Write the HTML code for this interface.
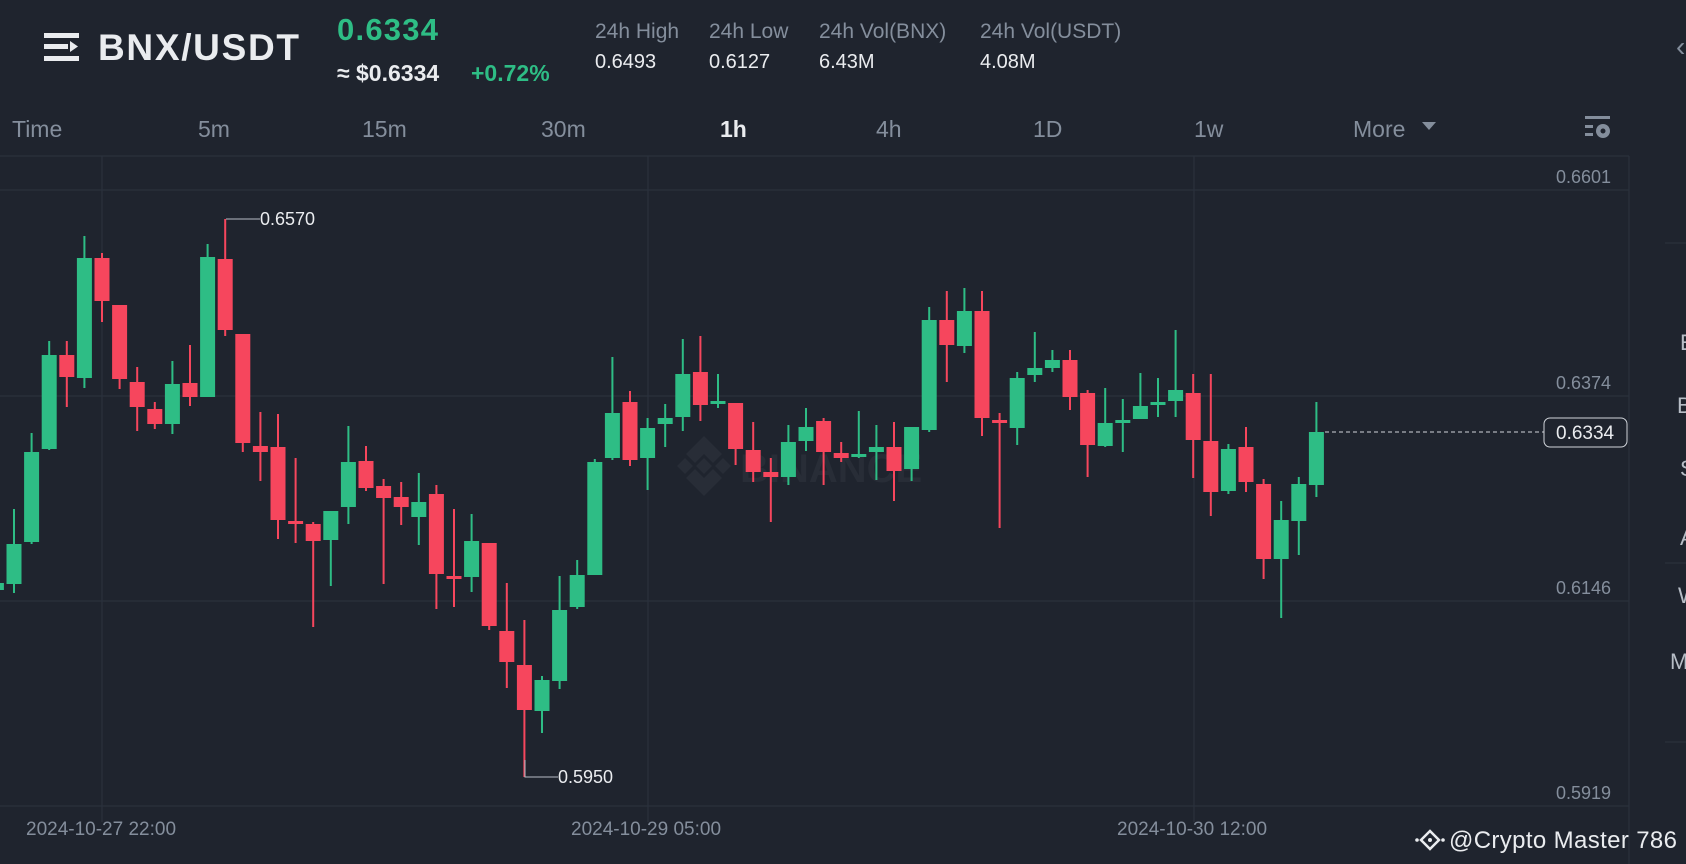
<!DOCTYPE html>
<html><head><meta charset="utf-8"><style>
html,body{margin:0;padding:0;background:#1f242e;width:1686px;height:864px;overflow:hidden}
svg{display:block}
text{font-family:"Liberation Sans",sans-serif}
</style></head><body>
<svg id="s" width="1686" height="864" viewBox="0 0 1686 864" xmlns="http://www.w3.org/2000/svg">
<rect width="1686" height="864" fill="#1f242e"/>
<g fill="#eaecef">
<rect x="44" y="33" width="35" height="5"/>
<rect x="44" y="44" width="24" height="5"/>
<polygon points="70,41 78,46.5 70,52"/>
<rect x="44" y="56" width="35" height="5"/>
</g>
<text x="98" y="60" font-size="37" font-weight="bold" fill="#eaecef" textLength="201">BNX/USDT</text>
<text x="337" y="40" font-size="31" font-weight="bold" fill="#2ebd85" textLength="101">0.6334</text>
<text x="337" y="81" font-size="23" font-weight="bold" fill="#eaecef">≈ $0.6334</text>
<text x="471" y="81" font-size="23" font-weight="bold" fill="#2ebd85">+0.72%</text>
<g font-size="21" fill="#848e9c">
<text x="595" y="38">24h High</text><text x="709" y="38">24h Low</text><text x="819" y="38">24h Vol(BNX)</text><text x="980" y="38">24h Vol(USDT)</text>
</g>
<g font-size="20" fill="#eaecef">
<text x="595" y="68">0.6493</text><text x="709" y="68">0.6127</text><text x="819" y="68">6.43M</text><text x="980" y="68">4.08M</text>
</g>
<text x="1676" y="56" font-size="28" fill="#848e9c">‹</text>
<g font-size="23" fill="#848e9c">
<text x="12" y="137">Time</text><text x="198" y="137">5m</text><text x="362" y="137">15m</text><text x="541" y="137">30m</text>
<text x="720" y="137" fill="#eaecef" font-weight="bold">1h</text>
<text x="876" y="137">4h</text><text x="1033" y="137">1D</text><text x="1194" y="137">1w</text><text x="1353" y="137">More</text>
</g>
<polygon points="1422,122 1436,122 1429,130" fill="#848e9c"/>
<g fill="#848e9c"><rect x="1585" y="116" width="25" height="3"/><rect x="1585" y="125" width="8" height="3"/><rect x="1585" y="133" width="8" height="3"/><circle cx="1603" cy="131" r="7"/><circle cx="1603" cy="131" r="2.5" fill="#1f242e"/></g>
<g stroke="#2b313c" stroke-width="1.2">
<line x1="0" y1="156" x2="1629" y2="156"/>
<line x1="0" y1="190" x2="1629" y2="190"/><line x1="0" y1="396" x2="1629" y2="396"/>
<line x1="0" y1="601" x2="1629" y2="601"/><line x1="0" y1="806" x2="1629" y2="806"/>
<line x1="102" y1="156" x2="102" y2="822"/><line x1="648" y1="156" x2="648" y2="822"/><line x1="1194" y1="156" x2="1194" y2="822"/>
<line x1="1629" y1="156" x2="1629" y2="864"/>
<line x1="1665" y1="243" x2="1686" y2="243"/><line x1="1665" y1="563" x2="1686" y2="563"/><line x1="1665" y1="742" x2="1686" y2="742"/>
</g>
<g font-size="18" fill="#848e9c">
<text x="1556" y="183">0.6601</text><text x="1556" y="389">0.6374</text><text x="1556" y="594">0.6146</text><text x="1556" y="799">0.5919</text>
</g>
<g font-size="19" fill="#848e9c">
<text x="26" y="835">2024-10-27 22:00</text><text x="571" y="835">2024-10-29 05:00</text><text x="1117" y="835">2024-10-30 12:00</text>
</g>
<g font-size="22" fill="#b7bdc6"><text x="1680" y="350">E</text><text x="1677" y="413">B</text><text x="1680" y="476">S</text><text x="1680" y="545">A</text><text x="1678" y="603">W</text><text x="1670" y="669">M</text></g>
<g fill="#282d37">
<polygon points="704,436 722,454 713,463 704,454 695,463 686,454"/>
<polygon points="704,458 712,466 704,474 696,466"/>
<polygon points="685,458 693,466 685,474 677,466"/>
<polygon points="723,458 731,466 723,474 715,466"/>
<polygon points="704,496 722,478 713,469 704,478 695,469 686,478"/>
<text x="740" y="482" font-size="40" font-weight="bold">BINANCE</text>
</g>
<g id="c"></g>
<polyline points="226,219 260,219" stroke="#b7bdc6" fill="none"/>
<text x="260" y="225" font-size="18" fill="#eaecef">0.6570</text>
<polyline points="525,760 525,777 558,777" stroke="#b7bdc6" fill="none"/>
<text x="558" y="783" font-size="18" fill="#eaecef">0.5950</text>
<line x1="1325" y1="432" x2="1544" y2="432" stroke="#d0d4da" stroke-dasharray="4,3"/>
<rect x="1544" y="418" width="83" height="29" rx="6" fill="#1f242e" stroke="#d0d4da"/>
<text x="1556" y="439" font-size="19" fill="#eaecef">0.6334</text>
<g fill="#eaecef">
<polygon points="1430,831 1439,840 1430,849 1421,840" fill="none" stroke="#eaecef" stroke-width="2.5"/>
<circle cx="1430" cy="840" r="2"/><circle cx="1417" cy="840" r="1.8"/><circle cx="1443" cy="840" r="1.8"/>
<text x="1449" y="848" font-size="24" textLength="228">@Crypto Master 786</text>
</g>
</svg>
<script>
var d=[[-6,'g',583,590,583,590],[-5,'g',544,584,509,593],[-4,'g',452,542,433,544],[-3,'g',355,449,341,450],[-2,'r',355,377,341,407],[-1,'g',258,378,236,388],[0,'r',258,301,253,322],[1,'r',305,379,305,389],[2,'r',382,407,367,431],[3,'r',409,424,402,429],[4,'g',384,424,361,434],[5,'r',383,397,345,406],[6,'g',257,397,244,397],[7,'r',259,330,219,336],[8,'r',334,443,334,452],[9,'r',446,452,412,481],[10,'r',447,520,414,539],[11,'r',521,523,458,543],[12,'r',524,541,522,627],[13,'g',511,540,511,586],
[14,'g',462,507,426,524],[15,'r',461,488,446,491],[16,'r',486,498,479,584],[17,'r',497,507,482,525],[18,'g',502,517,473,545],[19,'r',494,574,485,609],[20,'r',576,579,509,607],[21,'g',541,577,514,592],[22,'r',543,626,543,630],[23,'r',631,662,583,688],[24,'r',665,710,620,777],[25,'g',680,711,676,733],[26,'g',610,681,576,689],[27,'g',575,607,560,609],[28,'g',462,575,459,575],[29,'g',413,458,357,460],[30,'r',402,460,391,466],[31,'g',428,458,418,490],[32,'g',418,424,404,447],
[33,'g',374,417,339,431],[34,'r',372,405,336,421],[35,'g',401,403,374,408],[36,'r',403,449,403,465],[37,'r',450,472,422,482],[38,'r',472,477,458,522],[39,'g',442,477,425,485],[40,'g',427,441,408,451],[41,'r',421,452,418,485],[42,'r',453,458,442,462],[43,'g',454,456,411,458],[44,'g',447,452,425,480],[45,'r',447,471,422,501],[46,'g',427,469,427,481],[47,'g',320,430,307,432],[48,'r',320,345,291,382],[49,'g',311,346,288,353],[50,'r',311,418,291,436],
[51,'r',420,423,413,528],[52,'g',378,428,372,445],[53,'g',368,375,332,382],[54,'g',360,368,350,372],[55,'r',360,397,350,410],[56,'r',393,445,390,477],[57,'g',423,446,388,447],[58,'g',420,422,399,452],[59,'g',406,419,373,419],[60,'g',402,405,378,417],[61,'g',390,401,330,417],[62,'r',393,440,374,478],[63,'r',441,492,374,516],[64,'g',449,491,444,494],[65,'r',447,482,427,492],[66,'r',484,559,479,579],[67,'g',520,559,501,618],[68,'g',484,521,477,555],[69,'g',432,485,402,497]];
var h='';d.forEach(function(c){var x=102+c[0]*17.6,col=c[1]=='g'?'#2ebd85':'#f6465d';
h+='<rect x="'+(x-1)+'" y="'+c[4]+'" width="2" height="'+(c[5]-c[4])+'" fill="'+col+'"/>';
var bh=Math.max(c[3]-c[2],3);h+='<rect x="'+(x-7.5)+'" y="'+c[2]+'" width="15" height="'+bh+'" fill="'+col+'"/>';});
document.getElementById('c').innerHTML=h;
</script>
</body></html>
